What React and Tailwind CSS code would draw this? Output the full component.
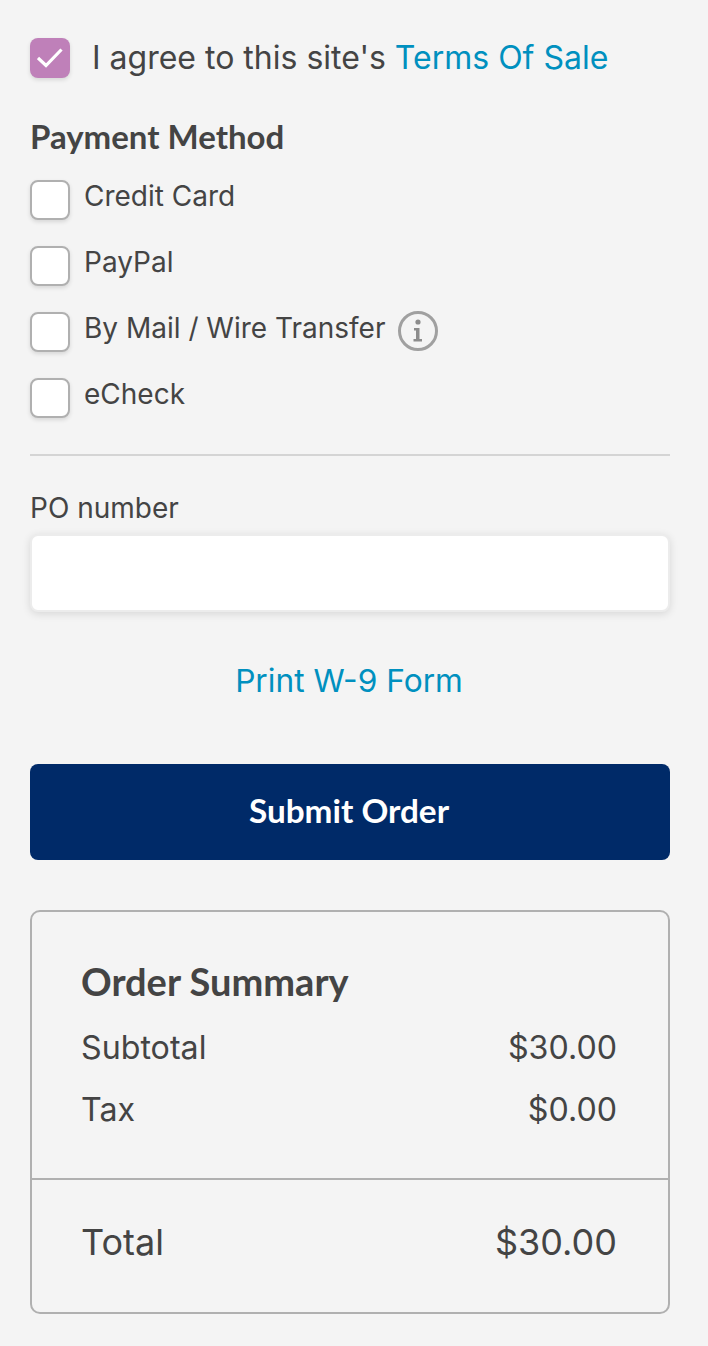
const inter = "font-['Inter',sans-serif]";

function Box({ label, children }) {
  return (
    <div className="flex items-start h-[40px] mb-[26px]">
      <span className="block w-[40px] h-[40px] shrink-0 bg-white border-2 border-[#b0b0b0] rounded-[8px] shadow-[0_2px_4px_rgba(0,0,0,0.12)]" />
      <span className="ml-[14px] text-[28px] leading-[32px] text-[#444444]">{label}</span>
      {children}
    </div>
  );
}

export default function App() {
  return (
    <div className={`${inter} w-[708px] h-[1346px] bg-[#f4f4f4] pl-[30px] pr-[38px] pt-[38px] text-[#444444] overflow-hidden`}>
      <div className="flex items-center h-[40px]">
        <span className="flex items-center justify-center w-[40px] h-[40px] bg-[#bf80b9] rounded-[8px] shadow-[0_2px_4px_rgba(0,0,0,0.12)]">
          <svg width="26" height="20" viewBox="0 0 26 20" fill="none" stroke="#ffffff" strokeWidth="3.2">
            <path d="M1 10 L9 17.5 L24.5 1.5" />
          </svg>
        </span>
        <span className="ml-[22px] text-[32px] leading-[38px] text-[#444444] whitespace-nowrap">
          I agree to this site's <span className="text-[#0090bf]">Terms Of Sale</span>
        </span>
      </div>

      <h2 className="mt-[39px] mb-[25px] font-['Lato',sans-serif] font-bold text-[33px] leading-[38px] text-[#444444]">Payment Method</h2>

      <div>
        <Box label="Credit Card" />
        <Box label="PayPal" />
        <Box label="By Mail / Wire Transfer">
          <svg className="ml-[12px] -mt-[2px] shrink-0" width="42" height="42" viewBox="0 0 42 42" fill="none">
            <circle cx="21" cy="21" r="18.5" stroke="#a0a0a0" strokeWidth="3" />
            <circle cx="21" cy="12" r="2.6" fill="#8c8c8c" />
            <path d="M17 18h5.5v11h2.5v2.5h-8.5v-2.5h2.5v-8.5h-2z" fill="#8c8c8c" />
          </svg>
        </Box>
        <Box label="eCheck" />
      </div>

      <div className="mt-[36px] h-[2px] bg-[#d4d4d4]" />

      <label className="block mt-[35px] text-[28px] leading-[34px] text-[#444444]">PO number</label>
      <div className="mt-[9px] h-[78px] bg-white rounded-[8px] border-2 border-[#ececec] shadow-[0_2px_8px_rgba(0,0,0,0.12)]" />

      <div className="mt-[49px] pr-[2px] text-center text-[31.7px] leading-[40px] text-[#0090bf]">Print W-9 Form</div>

      <button className="mt-[63px] block w-full h-[96px] pr-[2px] pb-[2px] rounded-[8px] bg-[#002a68] text-white font-['Lato',sans-serif] font-bold text-[33.3px]">Submit Order</button>

      <section className="mt-[50px] border-2 border-[#b0b0b0] rounded-[10px] h-[404px] flex flex-col">
        <div className="h-[268px] border-b-2 border-[#b0b0b0] pl-[49px] pr-[51px] pt-[47px]">
          <h3 className="font-['Lato',sans-serif] font-bold text-[38px] leading-[44px] text-[#444444]">Order Summary</h3>
          <div className="mt-[25px] flex justify-between text-[32.2px] leading-[40px]"><span>Subtotal</span><span>$30.00</span></div>
          <div className="mt-[22px] flex justify-between text-[32.2px] leading-[40px]"><span>Tax</span><span>$0.00</span></div>
        </div>
        <div className="pl-[49px] pr-[51px] pt-[40px] flex justify-between text-[36px] leading-[44px] font-normal">
          <span>Total</span><span>$30.00</span>
        </div>
      </section>
    </div>
  );
}
